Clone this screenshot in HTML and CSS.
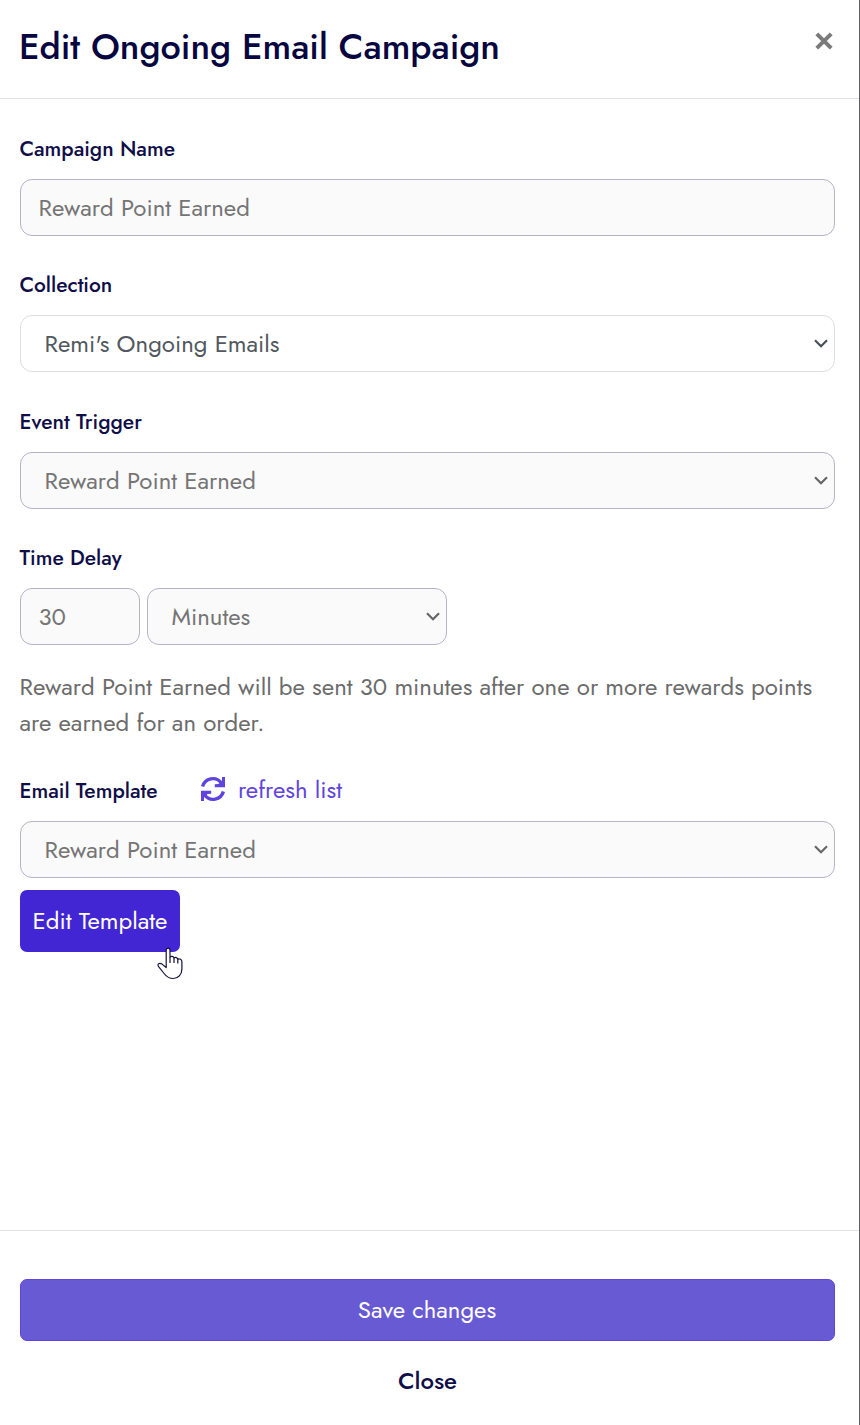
FILE: index.html
```html
<!DOCTYPE html>
<html lang="en">
<head>
    <meta charset="UTF-8">
    <meta name="viewport" content="width=device-width, initial-scale=1.0">
    <title>Edit Ongoing Email Campaign</title>
    <link rel="stylesheet" href="styles.css">
</head>
<body>
    <div class="modal">
        <div class="modal-header">
            <h1>Edit Ongoing Email Campaign</h1>
            <button type="button" class="close-icon" aria-label="Close">
                <svg width="18" height="18" viewBox="0 0 18 18"><path d="M1.8 1.8L16.2 16.2M16.2 1.8L1.8 16.2" fill="none" stroke="#7b7b7b" stroke-width="4"/></svg>
            </button>
        </div>

        <form class="modal-body">
            <!-- Campaign name -->
            <div class="form-group">
                <label for="campaignName">Campaign Name</label>
                <input type="text" class="control" id="campaignName" value="Reward Point Earned" disabled>
            </div>

            <!-- Collection -->
            <div class="form-group">
                <label for="collection">Collection</label>
                <div class="select">
                    <select class="control collection" id="collection">
                        <option>Remi's Ongoing Emails</option>
                    </select>
                    <svg class="chevron dark" width="14" height="9" viewBox="0 0 14 9"><path d="M1 1.2L7 7.2L13 1.2"/></svg>
                </div>
            </div>

            <!-- Event trigger -->
            <div class="form-group">
                <label for="eventTrigger">Event Trigger</label>
                <div class="select">
                    <select class="control" id="eventTrigger" disabled>
                        <option>Reward Point Earned</option>
                    </select>
                    <svg class="chevron" width="14" height="9" viewBox="0 0 14 9"><path d="M1 1.2L7 7.2L13 1.2"/></svg>
                </div>
            </div>

            <!-- Time delay -->
            <div class="form-group delay">
                <label for="delayValue">Time Delay</label>
                <div class="delay-row">
                    <input type="text" class="control number" id="delayValue" value="30" disabled>
                    <div class="select">
                        <select class="control" id="delayUnit" disabled>
                            <option>Minutes</option>
                        </select>
                        <svg class="chevron" width="14" height="9" viewBox="0 0 14 9"><path d="M1 1.2L7 7.2L13 1.2"/></svg>
                    </div>
                </div>
                <p class="help">Reward Point Earned will be sent 30 minutes after one or more rewards points <br>are earned for an order.</p>
            </div>

            <!-- Email template -->
            <div class="template">
                <div class="template-head">
                    <label class="label-template" for="emailTemplate">Email Template</label>
                    <a class="refresh">
                        <svg width="26" height="26" viewBox="0 0 26 26">
                            <path d="M2.6 10.5A10.6 10.6 0 0 1 21.2 6.8M23.4 15.5A10.6 10.6 0 0 1 4.8 19.2" fill="none" stroke="#5f45dd" stroke-width="3.4"/>
                            <path d="M22 1h3v10.2H14.8V8.3l3.6-.2L22 5zM4 25H1V14.8h10.2v2.9l-3.6.2L4 21z" fill="#5f45dd"/>
                        </svg>
                        <span>refresh list</span>
                    </a>
                </div>
                <div class="select">
                    <select class="control" id="emailTemplate" disabled>
                        <option>Reward Point Earned</option>
                    </select>
                    <svg class="chevron" width="14" height="9" viewBox="0 0 14 9"><path d="M1 1.2L7 7.2L13 1.2"/></svg>
                </div>
                <div class="edit-wrap">
                    <button type="button" class="btn edit-btn">Edit Template</button>
                    <svg class="cursor" width="26" height="33" viewBox="0 0 26 33">
                        <path d="M9.2 20.5V3.2C9.2.4 13 .4 13 3.2V10c1.2-1.2 3.6-.8 4 .9 1.3-.9 3.4-.4 3.8 1.2 1.7-.7 4.1.2 4.1 2.6v7.2C24.9 27.6 21 31.5 16.2 31.5c-4 0-6.5-1.6-8.7-4.5L1.6 19.6C-.2 16.9 2.4 15.5 5 17.1z" fill="#fff" stroke="#14123a" stroke-width="1.2" stroke-linejoin="round"/>
                        <path d="M13 10v6M17 11v5M20.8 12v4.5" fill="none" stroke="#14123a" stroke-width="1.2"/>
                    </svg>
                </div>
            </div>
        </form>

        <div class="modal-footer">
            <button type="button" class="btn save-btn">Save changes</button>
            <button type="button" class="btn close-btn">Close</button>
        </div>
    </div>
</body>
</html>
```
FILE: styles.css
```css
* {
    box-sizing: border-box;
}

body {
    margin: 0;
    background: #fff;
    font-family: Jost, Lato, sans-serif;
    font-size: 24px;
    line-height: 36px;
    color: #6c6c6c;
}

.modal {
    display: flex;
    flex-direction: column;
    height: 1425px;
    border-right: 1px solid #5f5f62;
}

.modal-header {
    display: flex;
    justify-content: space-between;
    height: 99px;
    padding: 19px 26px 0 19px;
    border-bottom: 1px solid #dedee8;
}

h1 {
    margin: 0;
    font-size: 36px;
    font-weight: 500;
    line-height: 54px;
    color: #080640;
    white-space: nowrap;
}

.close-icon {
    display: flex;
    height: 18px;
    margin-top: 13px;
    padding: 0;
    border: none;
    background: none;
}

.modal-body {
    flex: 1;
    padding: 31.8px 24px 0 20px;
}

.form-group {
    margin-bottom: 31.4px;
}

label {
    display: block;
    margin: 0 0 12px -0.5px;
    font-size: 21px;
    font-weight: 500;
    color: #100e48;
    white-space: nowrap;
}

.control {
    display: block;
    width: 100%;
    height: 57px;
    margin: 0;
    padding: 0 17.5px;
    border: 1px solid #b5b3c8;
    border-radius: 12px;
    background: #fafafa;
    font-family: inherit;
    font-size: 24px;
    font-weight: 400;
    color: #757575;
    opacity: 1;
    appearance: none;
}

.select {
    display: grid;
    align-items: center;
}

.select .control,
.chevron {
    grid-area: 1 / 1;
}

.select .control {
    padding-left: 23.5px;
}

.select .collection {
    border-color: #dedee2;
    background: #fff;
    color: #51585f;
}

.chevron {
    justify-self: end;
    margin-right: 7px;
    fill: none;
    stroke: #666;
    stroke-width: 2.2;
}

.dark {
    stroke: #495057;
}

.delay {
    margin-bottom: 31px;
}

.delay-row {
    display: flex;
    gap: 7px;
}

.number {
    width: 120px;
}

.delay-row .select {
    width: 300px;
}

.help {
    margin: 24px 0 0 -0.5px;
    white-space: nowrap;
}

.template-head {
    display: flex;
    height: 49px;
}

.label-template {
    width: 180.5px;
    padding-top: 1px;
}

.refresh {
    display: flex;
    height: 36px;
    gap: 12px;
    color: #5f45dd;
}

.refresh svg {
    margin-top: 4px;
}

.edit-wrap {
    position: relative;
    width: 160px;
    margin-top: 12px;
}

.btn {
    display: block;
    width: 100%;
    height: 62px;
    padding: 0;
    border: 1px solid transparent;
    border-radius: 7px;
    font-family: inherit;
    font-size: 24px;
    color: #fff;
    white-space: nowrap;
}

.edit-btn {
    background: #4326d3;
}

.cursor {
    position: absolute;
    left: 136.5px;
    top: 57px;
}

.modal-footer {
    height: 195px;
    padding: 48px 24px 0 20px;
    border-top: 1px solid #dee2e2;
}

.save-btn {
    padding: 0 1px 2px 0;
    border-color: #5f45dd;
    background: #685ad3;
}

.close-btn {
    margin-top: 8px;
    background: none;
    font-weight: 500;
    color: #100e48;
}
```
